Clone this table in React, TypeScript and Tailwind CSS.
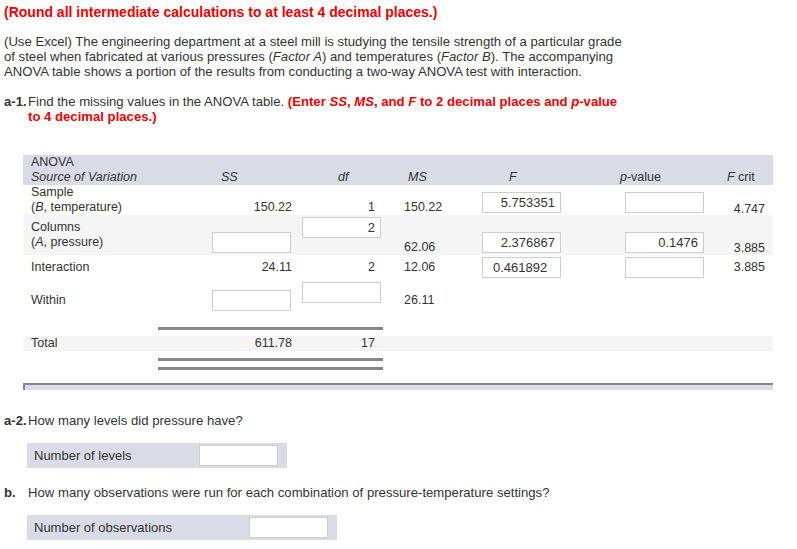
import React from "react";

const grid = "grid grid-cols-[135px_137px_90px_85px_100px_142px_61px]";

function Box({ value, className = "", left = false }: { value?: string; className?: string; left?: boolean }) {
  return (
    <div
      className={`h-[21px] w-[79px] border border-[#cccccc] bg-white text-[13px] leading-[19px] ${
        left ? "pl-[10px] text-left" : "pr-[5px] text-right"
      } ${className}`}
    >
      {value}
    </div>
  );
}

export default function App() {
  return (
    <div className="w-[797px] h-[549px] bg-white text-[#333333] font-['Liberation_Sans',Arial,sans-serif] text-[13px] leading-[15px] overflow-hidden">
      {/* intro */}
      <div className="pt-[5px] pl-[4px]">
        <p className="font-bold text-[#ee0000] text-[14px] leading-[15px]">
          (Round all intermediate calculations to at least 4 decimal places.)
        </p>
        <p className="mt-[14px] w-[625px] text-[13.15px]">
          (Use Excel) The engineering department at a steel mill is studying the tensile strength of a particular grade of
          steel when fabricated at various pressures (<i>Factor A</i>) and temperatures (<i>Factor B</i>). The accompanying
          ANOVA table shows a portion of the results from conducting a two-way ANOVA test with interaction.
        </p>
        <div className="mt-[15px] flex text-[13.15px]">
          <span className="w-[24px] shrink-0 font-bold">a-1.</span>
          <p className="w-[598px]">
            Find the missing values in the ANOVA table.{" "}
            <b className="text-[#ee0000]">
              (Enter <i>SS</i>, <i>MS</i>, and <i>F</i> to 2 decimal places and <i>p</i>-value to 4 decimal places.)
            </b>
          </p>
        </div>
      </div>

      {/* ANOVA table */}
      <div className="ml-[23px] mt-[31px] w-[750px] text-[12.5px]">
        <div className={`${grid} h-[30px] bg-[#d9dce6]`}>
          <div className="pl-[8px]">
            <div>ANOVA</div>
            <div className="italic">Source of Variation</div>
          </div>
          <div className="pt-[15px] pl-[63px] italic">SS</div>
          <div className="pt-[15px] pl-[43px] italic">df</div>
          <div className="pt-[15px] pl-[23px] italic">MS</div>
          <div className="pt-[15px] pl-[39px] italic">F</div>
          <div className="pt-[15px] pl-[50px]">
            <i>p</i>-value
          </div>
          <div className="pt-[15px] pl-[15px]">
            <i>F</i> crit
          </div>
        </div>

        {/* Sample */}
        <div className={`${grid} h-[30px]`}>
          <div className="pl-[8px]">
            <div>Sample</div>
            <div>
              (<i>B</i>, temperature)
            </div>
          </div>
          <div className="pt-[15px] pr-[3px] text-right">150.22</div>
          <div className="pt-[15px] pr-[10px] text-right">1</div>
          <div className="pt-[15px] pl-[19px]">150.22</div>
          <div className="pt-[7px] pl-[12px]">
            <Box value="5.753351" />
          </div>
          <div className="pt-[7px] pl-[55px]">
            <Box />
          </div>
          <div className="pt-[17px] pr-[8px] text-right">4.747</div>
        </div>

        {/* Columns */}
        <div className={`${grid} h-[40px] bg-[#f5f5f5]`}>
          <div className="pl-[8px] pt-[5px]">
            <div>Columns</div>
            <div>
              (<i>A</i>, pressure)
            </div>
          </div>
          <div className="pt-[17px] pl-[54px]">
            <Box />
          </div>
          <div className="pt-[2px] pl-[7px]">
            <Box value="2" />
          </div>
          <div className="pt-[25px] pl-[19px]">62.06</div>
          <div className="pt-[17px] pl-[12px]">
            <Box value="2.376867" />
          </div>
          <div className="pt-[17px] pl-[55px]">
            <Box value="0.1476" />
          </div>
          <div className="pt-[26px] pr-[8px] text-right">3.885</div>
        </div>

        {/* Interaction */}
        <div className={`${grid} h-[27px]`}>
          <div className="pl-[8px] pt-[5px]">Interaction</div>
          <div className="pt-[5px] pr-[3px] text-right">24.11</div>
          <div className="pt-[5px] pr-[10px] text-right">2</div>
          <div className="pt-[5px] pl-[19px]">12.06</div>
          <div className="pt-[2px] pl-[12px]">
            <Box value="0.461892" left />
          </div>
          <div className="pt-[2px] pl-[55px]">
            <Box />
          </div>
          <div className="pt-[5px] pr-[8px] text-right">3.885</div>
        </div>

        {/* Within */}
        <div className={`${grid} h-[45px]`}>
          <div className="pl-[8px] pt-[11px]">Within</div>
          <div className="pt-[8px] pl-[54px]">
            <Box />
          </div>
          <div className="pl-[7px]">
            <Box />
          </div>
          <div className="pt-[11px] pl-[19px]">26.11</div>
        </div>

        <div className="ml-[135px] w-[225px] h-[3px] bg-[#888888]" />

        {/* Total */}
        <div className={`${grid} mt-[6px] h-[15px] bg-[#f5f5f5]`}>
          <div className="pl-[8px]">Total</div>
          <div className="pr-[3px] text-right">611.78</div>
          <div className="pr-[10px] text-right">17</div>
        </div>

        <div className="mt-[7px] ml-[135px] w-[225px] h-[3px] bg-[#888888]" />
        <div className="mt-[6px] ml-[135px] w-[225px] h-[3px] bg-[#888888]" />

        <div className="mt-[13px] h-[7px] border-t-2 border-l-2 border-[#888888] bg-[#d9dce6]" />
      </div>

      {/* a-2 */}
      <div className="mt-[23px] pl-[4px] flex text-[13.15px]">
        <span className="w-[24px] shrink-0 font-bold">a-2.</span>
        <span>How many levels did pressure have?</span>
      </div>
      <div className="ml-[27px] mt-[15px] w-[260px] h-[25px] bg-[#d9dce6] flex items-center justify-between pl-[7px] pr-[9px]">
        <span>Number of levels</span>
        <Box />
      </div>

      {/* b */}
      <div className="mt-[17px] pl-[4px] flex text-[13.15px]">
        <span className="w-[24px] shrink-0 font-bold">b.</span>
        <span>How many observations were run for each combination of pressure-temperature settings?</span>
      </div>
      <div className="ml-[27px] mt-[15px] w-[310px] h-[25px] bg-[#d9dce6] flex items-center justify-between pl-[7px] pr-[9px]">
        <span>Number of observations</span>
        <Box />
      </div>
    </div>
  );
}
